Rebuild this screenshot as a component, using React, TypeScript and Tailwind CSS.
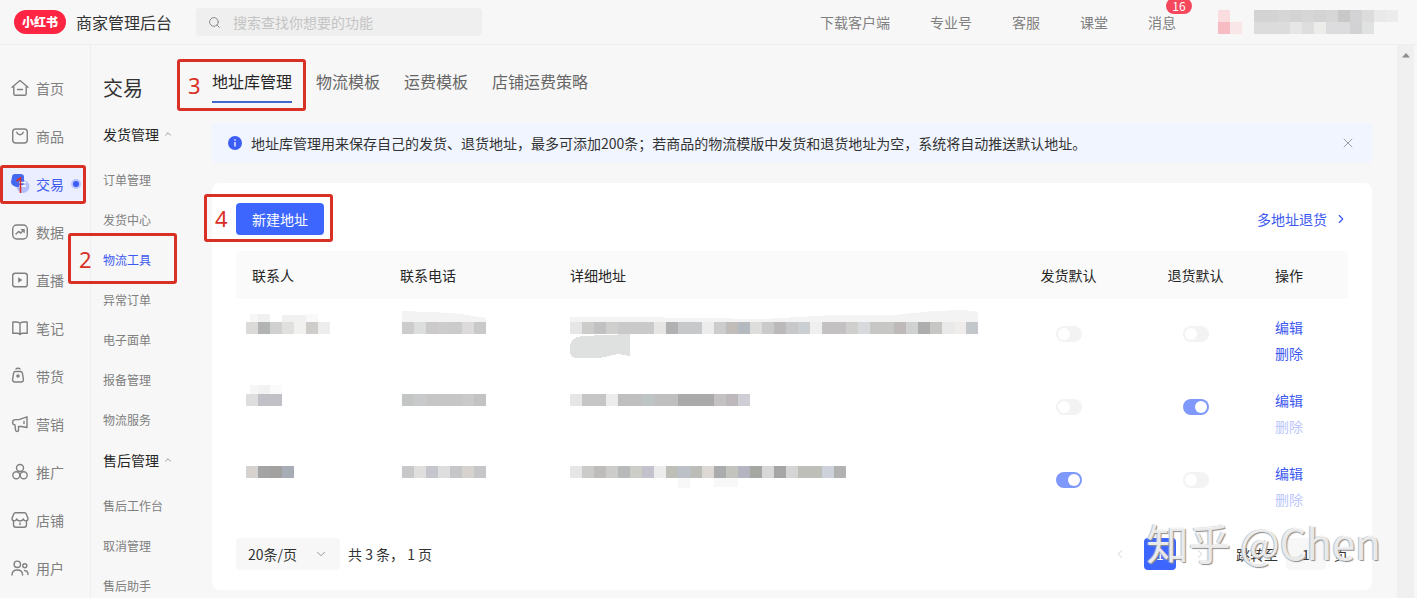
import React from 'react';
import { ChevronDown, ChevronLeft, ChevronRight, ChevronUp, Search, X } from 'lucide-react';

type Tile = [x: number, y: number, w: number, h: number, fill: string];

const Icon = ({ children }: { children: React.ReactNode }) => (
  <svg
    width="18"
    height="18"
    viewBox="0 0 18 18"
    fill="none"
    stroke="currentColor"
    strokeWidth="1.4"
    strokeLinecap="round"
    strokeLinejoin="round"
    className="shrink-0"
    aria-hidden="true"
  >
    {children}
  </svg>
);

const menu = [
  {
    label: '首页',
    icon: <Icon><path d="M1 8.2 9 1.5l8 6.7M2.8 7v8c0 .8.5 1.3 1.3 1.3h9.8c.8 0 1.3-.5 1.3-1.3V7M6.5 10.5h5" /></Icon>,
  },
  {
    label: '商品',
    icon: <Icon><rect x="1.7" y="2" width="14.6" height="14" rx="3" /><path d="M5.8 5.2a3.3 3.3 0 0 0 6.4 0" /></Icon>,
  },
  {
    label: '交易',
    active: true,
    icon: (
      <svg width="18" height="20" viewBox="0 0 18 20" className="shrink-0 overflow-visible" aria-hidden="true">
        <circle cx="12" cy="12.5" r="6.5" fill="#b3bffa" />
        <path d="M1 3c0-2 1-3 3-3h5c3 0 4 1 4 3v5c0 4-3 5-6 5S0 11 0 8Z" fill="#4468f2" />
        <path d="M8 8.5h7M8 12h7" stroke="#fff" strokeWidth="1.4" />
      </svg>
    ),
  },
  {
    label: '数据',
    icon: <Icon><rect x="1.7" y="2" width="14.6" height="14" rx="4" /><path d="m5 11 2.7-2.6 2 1.7L12.8 7M10.3 6.6h2.8v2.6" /></Icon>,
  },
  {
    label: '直播',
    icon: <Icon><rect x="1.7" y="2.2" width="14.6" height="13.6" rx="2.4" /><path d="m7.8 7 3 2-3 2Z" fill="currentColor" strokeWidth="0.8" /></Icon>,
  },
  {
    label: '笔记',
    icon: <Icon><path d="M9 4.2C7.800 3.200 6.500 3 5 3H1.800v11.300H6c1.300 0 2.300.4 3 1.200.7-.8 1.700-1.200 3-1.200h4.200V3H13c-1.500 0-2.800.2-4 1.200Zm0 0v11" /></Icon>,
  },
  {
    label: '带货',
    icon: <Icon><path d="M4.500 4.500h5c1.200 0 1.700.6 1.900 1.600l1 6.200c.2 1.700-.7 2.700-2.200 2.700H3.800c-1.500 0-2.400-1-2.200-2.700l1-6.200c.2-1 .7-1.600 1.900-1.600ZM5 2c.5-1 3.500-1 4 0" /><circle cx="7" cy="9" r="1.100" fill="currentColor" /></Icon>,
  },
  {
    label: '营销',
    icon: <Icon><path d="m8 4.600 8-2.800v10.700l-5.500-1M8 4.600H4.500C2.800 4.600 1.600 5.600 1.600 7.200s1 2.600 2.400 2.800l.5 5c.1 1 .5 1.500 1.500 1.500s1.500-.5 1.500-1.500v-3.600l3 .1M13 6.500v2" /></Icon>,
  },
  {
    label: '推广',
    icon: <Icon><circle cx="9" cy="5" r="3.500" /><circle cx="5.300" cy="12.300" r="3.500" /><circle cx="12.700" cy="12.300" r="3.500" /></Icon>,
  },
  {
    label: '店铺',
    icon: <Icon><path d="M4.500 1.800h9c1 0 1.500.4 1.800 1.300L17 7.500c0 3-4 3.200-4.700.5-.8 2.600-5.800 2.600-6.600 0C5 10.700 1 10.500 1 7.500l1.700-4.400c.3-.9.8-1.300 1.800-1.300ZM2.500 10v3.800c0 1.600 1 2.500 2.500 2.500h8c1.500 0 2.500-.9 2.500-2.500V10M9 12v1.500" /></Icon>,
  },
  {
    label: '用户',
    icon: <Icon><circle cx="6.300" cy="5.300" r="3.200" /><path d="M1 16c0-3 2.200-5 5.300-5s5.300 2 5.300 5M13.500 11.500c2.200.2 3.500 1.700 3.500 4" /><circle cx="13.800" cy="6.800" r="2" /></Icon>,
  },
];

const groups = [
  {
    title: '发货管理',
    items: ['订单管理', '发货中心', '物流工具', '异常订单', '电子面单', '报备管理', '物流服务'],
  },
  {
    title: '售后管理',
    items: ['售后工作台', '取消管理', '售后助手'],
  },
];

const tabs = ['地址库管理', '物流模板', '运费模板', '店铺运费策略'];

const topLinks = ['下载客户端', '专业号', '客服', '课堂'];

// One strip of 12px tiles
const strip = (x: number, y: number, fills: string[]): Tile[] =>
  fills.map((fill, i) => [x + i * 12, y, 12, 12, fill]);

const rows: {
  name: Tile[];
  phone: Tile[];
  phoneShade?: string;
  address: Tile[];
  addressShade?: string;
  addressBlob?: string;
  ship: boolean;
  refund: boolean;
}[] = [
  {
    name: [
      [4, 3, 8, 8, '#f6f6f6'],
      [12, 3, 12, 8, '#f0f0f0'],
      [36, 4, 24, 7, '#f1f1f1'],
      [60, 3, 12, 8, '#f9f9f9'],
      ...strip(0, 11, ['#dcdad9', '#b2b4b3', '#cfd0cf', '#e0e0df', '#f1f1ef', '#cfccca', '#ecedec']),
    ],
    phone: strip(8, 11, ['#cdcccd', '#dcdddd', '#cbc9c9', '#cccccc', '#cccbcb', '#dcdada', '#cac9ca']),
    phoneShade: 'M8 0 60 2 92 7v5H8Z',
    address: strip(6, 11, [
      '#e6e6e6', '#cccccb', '#c2c1c1', '#cfcfce', '#cacaca', '#cacaca', '#cacaca', '#e7e6e4', '#b1b0b2',
      '#c6c8c9', '#c6c8c9', '#ececec', '#cbcccb', '#bfbcba', '#b4b9bf', '#dddedb', '#c9cac9', '#bbb9ba',
      '#c6c8c9', '#cbcfd1', '#efefef', '#c3c1c1', '#c3c1c1', '#cfcfcd', '#d7dadd', '#c7c8c6', '#c7c8c6',
      '#bdbab9', '#d0d2d2', '#aeadae', '#c6c6c5', '#e9e9ea', '#f1ecec', '#c3c7cb',
    ]),
    addressShade: 'M6 6 66 6 200 8 270 4 330 4 370 0 400 -1 414 1v12H6Z',
    addressBlob: 'M6 36c0-6 4-10 12-11l48-2v22l-12-2-18 4H12c-4 0-6-3-6-7Z',
    ship: false,
    refund: false,
  },
  {
    name: [
      [4, 1, 8, 9, '#f6f6f6'],
      [12, 1, 12, 9, '#f2f2f2'],
      [24, 1, 12, 9, '#fafafa'],
      ...strip(0, 10, ['#dedede', '#c0c0c6', '#c0c0c6']),
    ],
    phone: strip(8, 10, ['#c4c5c5', '#c9cacb', '#c6c6c6', '#c6c6c6', '#c6c6c6', '#c9c9c9', '#c3c3c3']),
    address: strip(6, 10, [
      '#e6e6e6', '#c6c6c6', '#c6c6c6', '#ececec', '#bfbfbf', '#bfbfbf', '#bcc4c4', '#bfbfbf', '#bfbfbf',
      '#aaaaaa', '#aaaaaa', '#aaaaaa', '#c4c2c3', '#bcb8bb', '#cfced6',
    ]),
    ship: false,
    refund: true,
  },
  {
    name: strip(0, 9, ['#d5d2d0', '#a4a4a5', '#a3a0a0', '#a8acb4']),
    phone: strip(8, 9, ['#c8c7c9', '#e0dfdd', '#c5c6cc', '#dedede', '#c6c6c8', '#d5d2d0', '#c6c6c8']),
    address: [
      ...strip(6, 9, [
        '#e6e6e6', '#cbccc9', '#bfbcbb', '#cccdcb', '#b7baba', '#ccccc9', '#c3c2cc', '#ececec', '#bfbfba',
        '#bcc1c8', '#bcbcb8', '#dcd8d6', '#a9abac', '#c3c3c0', '#b5b5c2', '#a5a7a3', '#d8d8d8', '#a5a5a6',
        '#d4d5d4', '#bfbfba', '#bfbfba', '#cdd2da', '#b2b2b2',
      ]),
      [114, 21, 12, 10, '#f8f8f8'],
      [150, 21, 24, 9, '#f8f8f8'],
    ],
    ship: true,
    refund: false,
  },
];

const account: Tile[] = [
  [2, 0, 12, 12, '#fbdcdf'],
  [2, 12, 12, 12, '#f7bcc3'],
  [14, 12, 12, 12, '#f9e6e8'],
  ...strip(38, 0, [
    '#d3d3d3', '#d3d3d3', '#d6d6d6', '#d3d3d3', '#d6d6d6', '#d3d3d3', '#d6d6d6', '#c8c8c8', '#d3d3d5',
    '#dcdcdc', '#e9e9e9', '#ececec',
  ]),
  ...strip(38, 12, [
    '#dcdcdc', '#dcdcdc', '#dcdcdc', '#e6e6e6', '#dedede', '#ececea', '#dcdcde', '#dcdcde', '#d2d2d4', '#e0e2e2',
  ]),
];

const Mosaic = ({
  tiles,
  width,
  height,
  shade,
  blob,
}: {
  tiles: Tile[];
  width: number;
  height: number;
  shade?: string;
  blob?: string;
}) => (
  <svg width={width} height={height} shapeRendering="crispEdges" className="block overflow-visible" aria-hidden="true">
    {shade && <path d={shade} fill="#f3f3f3" />}
    {blob && <path d={blob} fill="#dfe1e1" />}
    {tiles.map(([x, y, w, h, fill], i) => (
      <rect key={i} x={x} y={y} width={w} height={h} fill={fill} />
    ))}
  </svg>
);

const Mark = ({ className, children }: { className: string; children?: React.ReactNode }) => (
  <span
    className={`pointer-events-none absolute z-10 flex items-center rounded-[3px] border-3 border-[#d93026] pl-2 font-['Noto_Sans',sans-serif] text-[22px] text-[#d93026] ${className}`}
  >
    {children}
  </span>
);

const Toggle = ({ label, checked }: { label: string; checked: boolean }) => (
  <input
    type="checkbox"
    role="switch"
    aria-label={label}
    defaultChecked={checked}
    className="inline-block h-4 w-[26px] appearance-none rounded-full bg-[#f3f3f3] p-0.5 align-top before:block before:size-3 before:rounded-full before:bg-white checked:bg-[#7f98fb] checked:before:ml-2.5"
  />
);

const Header = () => (
  <header className="flex h-[45px] shrink-0 items-center border-b border-[#eeeeee] pr-[17px] pl-3.5">
    <span className="flex h-6 w-[52px] items-center justify-center rounded-full bg-[#ff2442] text-xs font-black text-white">
      小红书
    </span>
    <span className="ml-2.5 text-base text-[#333333]">商家管理后台</span>
    <label className="ml-6 flex h-7 w-[286px] items-center gap-3 rounded bg-[#efefef] pl-3">
      <Search size={13} strokeWidth={1.8} className="text-[#888888]" />
      <input
        type="text"
        aria-label="搜索"
        placeholder="搜索查找你想要的功能"
        className="min-w-0 flex-1 bg-transparent text-sm outline-none placeholder:text-[#c4c4c4]"
      />
    </label>
    <nav className="ml-auto flex items-center gap-10 text-sm text-[#808080]">
      {topLinks.map((link) => (
        <a key={link} href="#">{link}</a>
      ))}
      <a href="#" className="relative">
        消息
        <span className="absolute -top-3.5 left-[18px] flex h-4 w-[26px] items-center justify-center rounded-full bg-[#f5485d] text-xs text-white">
          16
        </span>
      </a>
      <Mosaic tiles={account} width={184} height={24} />
    </nav>
  </header>
);

const Sidebar = () => (
  <nav className="w-[91px] shrink-0 border-r border-[#eeeeee] pt-[19px]">
    {menu.map((item) => (
      <a
        key={item.label}
        href="#"
        className={`relative flex h-12 items-center ${item.active ? 'text-[#3d5af0]' : 'text-[#808080]'}`}
      >
        <span
          className={`flex h-8 w-[84px] items-center gap-[7px] pl-[11px] text-sm ${item.active ? 'bg-[#eaeeff]' : ''}`}
        >
          {item.icon}
          {item.label}
          {item.active && <span className="size-2.5 rounded-full border-2 border-[#b9c6ff] bg-[#3d5af0]" />}
        </span>
        {item.active && (
          <>
            <Mark className="top-[5px] left-0 h-[39px] w-[86px]">
              <svg width="18" height="22" viewBox="0 0 18 22" fill="none" aria-hidden="true">
                <path d="M5.500 7 9.500 4v15" stroke="#d93026" strokeWidth="1.600" />
              </svg>
            </Mark>
          </>
        )}
      </a>
    ))}
  </nav>
);

const SubNav = () => (
  <nav className="w-[105px] shrink-0 pl-3">
    <h1 className="mt-6 mb-[7px] text-xl leading-[38px] text-[#333333]">交易</h1>
    {groups.map((group) => (
      <section key={group.title}>
        <button type="button" className="mb-1.5 flex h-10 items-center gap-1 text-sm text-[#262626]">
          {group.title}
          <ChevronUp size={10} className="text-[#888888]" />
        </button>
        <ul className="text-xs text-[#808080]">
          {group.items.map((item) => (
            <li key={item} className="relative h-10 leading-10">
              <a href="#" className={item === '物流工具' ? 'text-[#3d5af0]' : ''}>{item}</a>
              {item === '物流工具' && <Mark className="-top-[7px] -left-[35px] h-[51px] w-[109px]">2</Mark>}
            </li>
          ))}
        </ul>
      </section>
    ))}
  </nav>
);

const AddressTable = () => (
  <table className="mt-4 w-full table-fixed text-left text-sm">
    <colgroup>
      <col className="w-[148px]" />
      <col className="w-[170px]" />
      <col />
      <col className="w-[127px]" />
      <col className="w-[127px]" />
      <col className="w-[89px]" />
    </colgroup>
    <thead>
      <tr className="h-12 bg-[#fafafa] text-[#262626] *:font-normal">
        <th className="rounded-l px-4">联系人</th>
        <th className="px-4">联系电话</th>
        <th className="px-4">详细地址</th>
        <th className="text-center">发货默认</th>
        <th className="text-center">退货默认</th>
        <th className="rounded-r px-4">操作</th>
      </tr>
    </thead>
    <tbody>
      {rows.map((row, i) => (
        <tr key={i} className="align-top">
          <td className="pt-3 pl-2.5">
            <Mosaic tiles={row.name} width={84} height={48} />
          </td>
          <td className="pt-3 pl-2.5">
            <Mosaic tiles={row.phone} width={92} height={48} shade={row.phoneShade} />
          </td>
          <td className="pt-3 pl-2.5">
            <Mosaic tiles={row.address} width={414} height={48} shade={row.addressShade} blob={row.addressBlob} />
          </td>
          <td className="pt-[27px] text-center">
            <Toggle label="发货默认" checked={row.ship} />
          </td>
          <td className="pt-[27px] text-center">
            <Toggle label="退货默认" checked={row.refund} />
          </td>
          <td className="px-4 pt-[15px] pb-1.5">
            <div className="flex flex-col items-start leading-[26px] text-[#3d5af0]">
              <button type="button">编辑</button>
              <button type="button" disabled={row.ship || row.refund} className="disabled:text-[#bcc7fb]">
                删除
              </button>
            </div>
          </td>
        </tr>
      ))}
    </tbody>
  </table>
);

const Pagination = () => (
  <div className="mt-5 flex items-center gap-2 text-sm text-[#333333]">
    <div className="relative">
      <select aria-label="每页条数" className="block h-8 w-[104px] appearance-none rounded bg-[#f7f7f7] pl-3">
        <option>20条/页</option>
      </select>
      <ChevronDown size={14} strokeWidth={1.5} className="pointer-events-none absolute top-[9px] right-3 text-[#888888]" />
    </div>
    <span className="whitespace-pre">共 3 条， 1 页</span>
    <div className="ml-auto flex items-center gap-2">
      <button type="button" aria-label="上一页" className="flex size-8 items-center justify-center text-[#cccccc]">
        <ChevronLeft size={14} strokeWidth={1.5} />
      </button>
      <button type="button" className="size-8 rounded bg-[#3d66ff] text-white">1</button>
      <button type="button" aria-label="下一页" className="flex size-8 items-center justify-center text-[#cccccc]">
        <ChevronRight size={14} strokeWidth={1.5} />
      </button>
      <label htmlFor="page" className="ml-3">跳转至</label>
      <input id="page" type="text" defaultValue="1" className="h-8 w-10 rounded bg-[#f7f7f7] text-center" />
      <span>页</span>
    </div>
  </div>
);

const App = () => {
  return (
    <div className="flex h-screen flex-col overflow-hidden bg-[#f7f7f7] font-['Noto_Sans_CJK_SC',sans-serif]">
      <Header />
      <div className="flex min-h-0 flex-1">
        <Sidebar />
        <SubNav />
        <main className="min-w-0 flex-1 pt-4 pr-[25px] pb-2 pl-4">
          <div className="flex gap-6 text-base text-[#666666]">
            {tabs.map((tab, i) => (
              <div key={tab} className="relative">
                <button
                  type="button"
                  className={`h-[42px] border-b-2 ${i === 0 ? 'border-[#4468d0] text-[#262626]' : 'border-transparent'}`}
                >
                  {tab}
                </button>
                {i === 0 && <Mark className="-top-0.5 -left-[35px] h-[52px] w-[129px]">3</Mark>}
              </div>
            ))}
          </div>

          <div className="mt-5 flex h-10 items-center gap-[9px] rounded bg-[#f0f5ff] px-4 text-sm text-[#333333]">
            <svg width="14" height="14" viewBox="0 0 14 14" className="shrink-0" aria-hidden="true">
              <circle cx="7" cy="7" r="7" fill="#3d5ef5" />
              <path d="M7 6v4.500M7 3.300v1.400" stroke="#fff" strokeWidth="1.300" />
            </svg>
            <p className="truncate">
              地址库管理用来保存自己的发货、退货地址，最多可添加200条；若商品的物流模版中发货和退货地址为空，系统将自动推送默认地址。
            </p>
            <button type="button" aria-label="关闭" className="ml-auto text-[#888888]">
              <X size={16} strokeWidth={1.2} />
            </button>
          </div>

          <div className="relative mt-5 rounded-lg bg-white px-6 py-5">
            <div className="flex items-center justify-between">
              <div className="relative">
                <button type="button" className="block h-8 w-[88px] rounded bg-[#3d66ff] text-sm text-white">
                  新建地址
                </button>
                <Mark className="-top-[9px] -left-8 h-12 w-[129px]">4</Mark>
              </div>
              <a href="#" className="flex items-center gap-[7px] text-sm text-[#3d5af0]">
                多地址退货
                <ChevronRight size={14} />
              </a>
            </div>
            <AddressTable />
            <Pagination />
            <div className="pointer-events-none absolute right-[-9px] bottom-5 text-[42px] leading-[56px] whitespace-pre text-white/80 [text-shadow:1px_1px_1px_#8c8c8c,-1px_0_1px_#bbbbbb]">
              知乎 @Chen
            </div>
          </div>
        </main>
        <div className="mr-[3px] w-[17px] shrink-0 bg-[#f0f0f0] pt-2">
          <svg width="17" height="5" viewBox="0 0 17 5" aria-hidden="true">
            <path d="M5 4.500h8L9 0Z" fill="#8c8c8c" />
          </svg>
        </div>
      </div>
    </div>
  );
};

export default App;
